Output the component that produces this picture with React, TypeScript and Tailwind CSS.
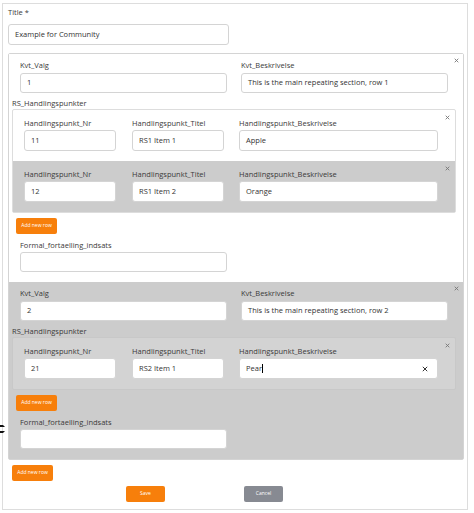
import type { ReactElement, ReactNode } from 'react';

const FONT = "font-['Open_Sans',_'Liberation_Sans',_sans-serif]";

function Label({ children }: { children: ReactNode }): ReactElement {
  return <div className="h-[10px] text-[7.5px] leading-[10px] text-[#3a3a3a] whitespace-nowrap">{children}</div>;
}

function Field({ value, className, children }: { value?: string; className: string; children?: ReactNode }): ReactElement {
  return (
    <div
      className={`flex items-center rounded-[3px] border border-[#d4d4d4] bg-white px-[6px] text-[7.5px] text-[#333] ${className}`}
    >
      <span className="whitespace-nowrap">{value}</span>
      {children}
    </div>
  );
}

function CloseX({ className }: { className: string }): ReactElement {
  return (
    <svg className={`absolute h-[5px] w-[5px] text-[#777] ${className}`} viewBox="0 0 5 5" aria-hidden="true">
      <path d="M0.7 0.7 L4.3 4.3 M4.3 0.7 L0.7 4.3" stroke="currentColor" strokeWidth={0.9} />
    </svg>
  );
}

function AddRow({ className }: { className: string }): ReactElement {
  return (
    <button
      type="button"
      className={`flex h-[16px] w-[41px] items-center justify-center rounded-[2px] bg-[#f77f0b] text-[5px] text-white ${className}`}
    >
      Add new row
    </button>
  );
}

type SubRow = { nr: string; titel: string; beskrivelse: string; caret?: boolean };

function SubRowView({ row, shaded }: { row: SubRow; shaded: boolean }): ReactElement {
  return (
    <div className={`relative flex gap-[15px] pl-[11px] pt-[8px] pb-[10px] ${shaded ? 'bg-[#cccccc]' : ''}`}>
      <CloseX className="right-[5px] top-[5px]" />
      <div className="flex w-[92px] flex-col gap-[2px]">
        <Label>Handlingspunkt_Nr</Label>
        <Field value={row.nr} className="h-[21px]" />
      </div>
      <div className="ml-px flex w-[92px] flex-col gap-[2px]">
        <Label>Handlingspunkt_Titel</Label>
        <Field value={row.titel} className="h-[21px]" />
      </div>
      <div className="flex w-[199px] flex-col gap-[2px]">
        <Label>Handlingspunkt_Beskrivelse</Label>
        <Field value={row.beskrivelse} className="h-[21px]">
          {row.caret && (
            <>
              <span className="h-[9px] w-px bg-black" />
              <svg className="ml-auto mr-[3px] h-[6px] w-[6px] text-[#333]" viewBox="0 0 6 6" aria-hidden="true">
                <path d="M0.8 0.8 L5.2 5.2 M5.2 0.8 L0.8 5.2" stroke="currentColor" strokeWidth={1} />
              </svg>
            </>
          )}
        </Field>
      </div>
    </div>
  );
}

type MainRow = { valg: string; beskrivelse: string; items: SubRow[] };

const ROWS: MainRow[] = [
  {
    valg: '1',
    beskrivelse: 'This is the main repeating section, row 1',
    items: [
      { nr: '11', titel: 'RS1 Item 1', beskrivelse: 'Apple' },
      { nr: '12', titel: 'RS1 Item 2', beskrivelse: 'Orange' },
    ],
  },
  {
    valg: '2',
    beskrivelse: 'This is the main repeating section, row 2',
    items: [{ nr: '21', titel: 'RS2 Item 1', beskrivelse: 'Pear', caret: true }],
  },
];

function MainRowView({ row, shaded }: { row: MainRow; shaded: boolean }): ReactElement {
  return (
    <div className={`relative px-[3px] pt-[6px] pb-[10px] ${shaded ? 'bg-[#cccccc]' : 'bg-white'}`}>
      <CloseX className="right-[4px] top-[4px]" />
      <div className="flex gap-[14px] pl-[8px]">
        <div className="flex w-[207px] flex-col gap-[3px]">
          <Label>Kvt_Valg</Label>
          <Field value={row.valg} className="h-[20px]" />
        </div>
        <div className="flex w-[207px] flex-col gap-[3px]">
          <Label>Kvt_Beskrivelse</Label>
          <Field value={row.beskrivelse} className="h-[20px]" />
        </div>
      </div>
      <div className="mt-[5px]">
        <Label>RS_Handlingspunkter</Label>
      </div>
      <div
        className={`mt-[1px] w-[444px] rounded-[2px] border ${shaded ? 'border-[#c8c8c8] bg-[#d3d3d3]' : 'border-[#dddddd] bg-white'}`}
      >
        {row.items.map((item, i) => (
          <SubRowView key={item.nr} row={item} shaded={!shaded && i % 2 === 1} />
        ))}
      </div>
      <AddRow className="ml-[4px] mt-[5px]" />
      <div className="ml-[8px] mt-[6px] flex w-[207px] flex-col gap-[2px]">
        <Label>Formal_fortaelling_indsats</Label>
        <Field className="h-[20px]" />
      </div>
    </div>
  );
}

export default function App(): ReactElement {
  return (
    <div className={`relative h-[513px] w-[474px] overflow-hidden bg-white pl-[2px] pt-[3px] ${FONT}`}>
      <div className="h-[507px] w-[466px] border border-[#dddddd] pl-[5px] pt-[3px]">
        <Label>Title *</Label>
        <Field value="Example for Community" className="mt-[7px] h-[21px] w-[221px]" />
        <div className="mt-[8px] w-[456px] rounded-[2px] border border-[#d4d4d4]">
          {ROWS.map((row, i) => (
            <MainRowView key={row.valg} row={row} shaded={i % 2 === 1} />
          ))}
        </div>
        <AddRow className="ml-[4px] mt-[5px]" />
        <div className="mt-[5px] flex">
          <button
            type="button"
            className="ml-[118px] flex h-[16px] w-[39px] items-center justify-center rounded-[2px] bg-[#f77f0b] text-[5px] text-white"
          >
            Save
          </button>
          <button
            type="button"
            className="ml-[79px] flex h-[16px] w-[39px] items-center justify-center rounded-[2px] bg-[#878a92] text-[5px] text-white"
          >
            Cancel
          </button>
        </div>
      </div>
      {/* mouse cursor remnant at the left edge */}
      <svg className="absolute left-0 top-[423px] h-[12px] w-[6px]" viewBox="0 0 6 12" aria-hidden="true">
        <path d="M0 2 L3 2 L5 4 L0 4 Z M0 8 L5 8 L3 10 L0 10 Z" fill="#111" />
      </svg>
    </div>
  );
}
